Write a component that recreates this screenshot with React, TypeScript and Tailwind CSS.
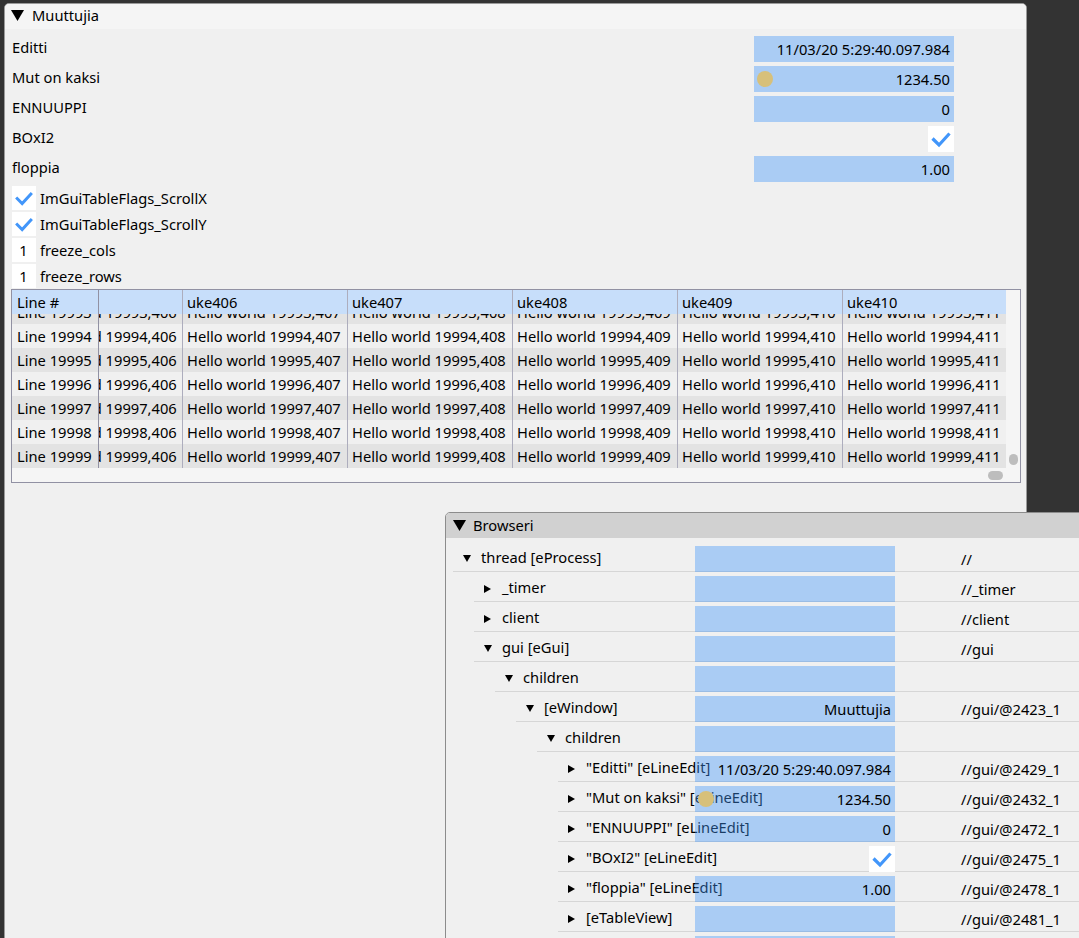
import React from "react";

const FIELD = "relative flex h-[26px] w-[200px] shrink-0 items-center justify-end bg-[#4296fa66] pr-[4px]";

const INDENT = ["pl-[17px]", "pl-[38px]", "pl-[59px]", "pl-[80px]", "pl-[101px]", "pl-[122px]", "pl-[143px]"];
const LINE_INDENT = ["ml-[7px]", "ml-[28px]", "ml-[49px]", "ml-[70px]", "ml-[91px]", "ml-[112px]", "ml-[133px]"];

const TitleArrow = () => (
  <svg width="13" height="11" viewBox="0 0 13 11" className="shrink-0">
    <polygon points="0,0 13,0 6.5,11" fill="#000" />
  </svg>
);

const TreeArrow = ({ open }: { open: boolean }) =>
  open ? (
    <svg width="8" height="7" viewBox="0 0 8 7">
      <polygon points="0,0 8,0 4,7" fill="#000" />
    </svg>
  ) : (
    <svg width="7" height="8" viewBox="0 0 7 8">
      <polygon points="0,0 7,4 0,8" fill="#000" />
    </svg>
  );

const Check = ({ size }: { size: number }) => (
  <svg width={size} height={size} viewBox="0 0 26 26">
    <path d="M4.5 12.5 L11 19 L21.5 7.5" fill="none" stroke="#4296fa" strokeWidth={3.2} />
  </svg>
);

const Dot = () => <div className="absolute left-[3px] top-[5px] h-[16px] w-[16px] rounded-full bg-[#d7c07a]" />;

interface VarRow {
  label: string;
  value?: string;
  dot?: boolean;
  check?: boolean;
}

const vars: VarRow[] = [
  { label: "Editti", value: "11/03/20 5:29:40.097.984" },
  { label: "Mut on kaksi", value: "1234.50", dot: true },
  { label: "ENNUUPPI", value: "0" },
  { label: "BOxI2", check: true },
  { label: "floppia", value: "1.00" },
];

const options = [
  { box: "check", label: "ImGuiTableFlags_ScrollX" },
  { box: "check", label: "ImGuiTableFlags_ScrollY" },
  { box: "1", label: "freeze_cols" },
  { box: "1", label: "freeze_rows" },
];

const lines = [19993, 19994, 19995, 19996, 19997, 19998, 19999];
const cols = [407, 408, 409, 410];

interface TreeRow {
  depth: number;
  open: boolean;
  label: string;
  value?: string;
  dot?: boolean;
  check?: boolean;
  path?: string;
}

const tree: TreeRow[] = [
  { depth: 0, open: true, label: "thread [eProcess]", path: "//" },
  { depth: 1, open: false, label: "_timer", path: "//_timer" },
  { depth: 1, open: false, label: "client", path: "//client" },
  { depth: 1, open: true, label: "gui [eGui]", path: "//gui" },
  { depth: 2, open: true, label: "children" },
  { depth: 3, open: true, label: "[eWindow]", value: "Muuttujia", path: "//gui/@2423_1" },
  { depth: 4, open: true, label: "children" },
  { depth: 5, open: false, label: '"Editti" [eLineEdit]', value: "11/03/20 5:29:40.097.984", path: "//gui/@2429_1" },
  { depth: 5, open: false, label: '"Mut on kaksi" [eLineEdit]', value: "1234.50", dot: true, path: "//gui/@2432_1" },
  { depth: 5, open: false, label: '"ENNUUPPI" [eLineEdit]', value: "0", path: "//gui/@2472_1" },
  { depth: 5, open: false, label: '"BOxI2" [eLineEdit]', check: true, path: "//gui/@2475_1" },
  { depth: 5, open: false, label: '"floppia" [eLineEdit]', value: "1.00", path: "//gui/@2478_1" },
  { depth: 5, open: false, label: "[eTableView]", path: "//gui/@2481_1" },
  { depth: 6, open: false, label: "children" },
];

const TableArea = () => (
  <div className="-ml-px mt-px flex h-[194px] w-[1010px] flex-col border border-[#9191a3]">
    <div className="flex h-[178px]">
      <div className="flex w-[994px] flex-col">
        <div className="flex h-[24px] bg-[#c7defa]">
          <div className="flex w-[87px] items-center border-r border-[#9191a3] pl-[5px]">Line #</div>
          <div className="w-[84px] border-r border-[#adadbd]" />
          {[406, ...cols].map((c, i) => (
            <div
              key={c}
              className={`flex items-center pl-[4px] ${i < 4 ? "w-[165px] border-r border-[#adadbd]" : "w-[163px]"}`}
            >
              uke{c}
            </div>
          ))}
        </div>
        <div className="h-[154px] overflow-hidden">
          {lines.map((n, r) => (
            <div
              key={n}
              className={`flex h-[24px] ${r === 0 ? "-mt-[14px]" : ""} ${n % 2 === 1 ? "bg-[#e3e3e3]" : ""}`}
            >
              <div className="flex w-[87px] shrink-0 items-center border-r border-[#9191a3] pl-[5px]">Line {n}</div>
              <div className="flex w-[84px] shrink-0 items-center justify-end overflow-hidden border-r border-[#adadbd]">
                <div className="w-[165px] shrink-0 whitespace-nowrap pl-[6px]">Hello world {n},406</div>
              </div>
              {cols.map((c) => (
                <div
                  key={c}
                  className="flex w-[165px] shrink-0 items-center whitespace-nowrap border-r border-[#adadbd] pl-[4px]"
                >
                  Hello world {n},{c}
                </div>
              ))}
              <div className="flex w-[163px] shrink-0 items-center overflow-hidden whitespace-nowrap pl-[4px]">
                Hello world {n},411
              </div>
            </div>
          ))}
        </div>
      </div>
      <div className="flex w-[14px] flex-col items-center justify-end bg-[#f5f5f5] pb-[3px]">
        <div className="h-[11px] w-[9px] rounded-full bg-[#bdbdbd]" />
      </div>
    </div>
    <div className="flex h-[14px] bg-[#f5f5f5]">
      <div className="flex w-[994px] items-center justify-end pr-[3px]">
        <div className="h-[9px] w-[15px] rounded-full bg-[#bdbdbd]" />
      </div>
    </div>
  </div>
);

export default function App() {
  return (
    <div className="relative h-[938px] w-[1079px] overflow-hidden bg-[#333333] font-['Noto_Sans',sans-serif] text-[14.7px] leading-none text-black">
      {/* Muuttujia window */}
      <div className="absolute left-[4px] top-[3px] flex h-[960px] w-[1023px] flex-col overflow-hidden rounded-t-[5px] border border-[#9a9a9a] bg-[#f0f0f0]">
        <div className="flex h-[25px] shrink-0 items-center gap-[8px] bg-[#f5f5f5] pb-[2px] pl-[6px]">
          <TitleArrow />
          <span>Muuttujia</span>
        </div>
        <div className="flex flex-col pl-[7px] pt-[7px]">
          <div className="flex flex-col gap-[4px]">
            {vars.map((v) => (
              <div key={v.label} className="flex h-[26px] items-center">
                <div className="w-[742px] shrink-0 pb-[4px]">{v.label}</div>
                {v.check ? (
                  <div className="flex w-[200px] justify-end">
                    <div className="flex h-[26px] w-[26px] items-center justify-center bg-white">
                      <Check size={26} />
                    </div>
                  </div>
                ) : (
                  <div className={FIELD}>
                    {v.dot && <Dot />}
                    {v.value}
                  </div>
                )}
              </div>
            ))}
          </div>
          <div className="mt-[4px] flex flex-col gap-[2px]">
            {options.map((o) => (
              <div key={o.label} className="flex h-[24px] items-center gap-[4px]">
                <div className="flex h-[24px] w-[24px] items-center justify-center bg-white">
                  {o.box === "check" ? <Check size={24} /> : <span className="pr-px">{o.box}</span>}
                </div>
                <span>{o.label}</span>
              </div>
            ))}
          </div>
          <TableArea />
        </div>
      </div>

      {/* Browseri window */}
      <div className="absolute left-[445px] top-[512px] flex h-[480px] w-[700px] flex-col overflow-hidden rounded-tl-[5px] border border-[#8c8c8c] bg-[#f0f0f0]">
        <div className="flex h-[25px] shrink-0 items-center gap-[7px] bg-[#d1d1d1] pl-[7px]">
          <TitleArrow />
          <span>Browseri</span>
        </div>
        <div className="flex flex-col pt-[8px]">
          {tree.map((t, i) => (
            <div key={i}>
              <div className="flex h-[26px] items-center">
                <div className={`flex w-[249px] shrink-0 items-center whitespace-nowrap ${INDENT[t.depth]}`}>
                  <span className="flex w-[18px] shrink-0 items-center">
                    <TreeArrow open={t.open} />
                  </span>
                  <span className="pb-[4px]">{t.label}</span>
                </div>
                {t.check ? (
                  <div className="relative flex w-[200px] shrink-0 justify-end">
                    <div className="flex h-[26px] w-[26px] items-center justify-center bg-white">
                      <Check size={26} />
                    </div>
                  </div>
                ) : (
                  <div className={FIELD}>
                    {t.dot && <Dot />}
                    {t.value}
                  </div>
                )}
                <div className="whitespace-nowrap pl-[66px]">{t.path}</div>
              </div>
              <div className={`-mt-px mb-[4px] h-px bg-[#d6d6d6] ${LINE_INDENT[t.depth]}`} />
            </div>
          ))}
        </div>
      </div>
    </div>
  );
}
